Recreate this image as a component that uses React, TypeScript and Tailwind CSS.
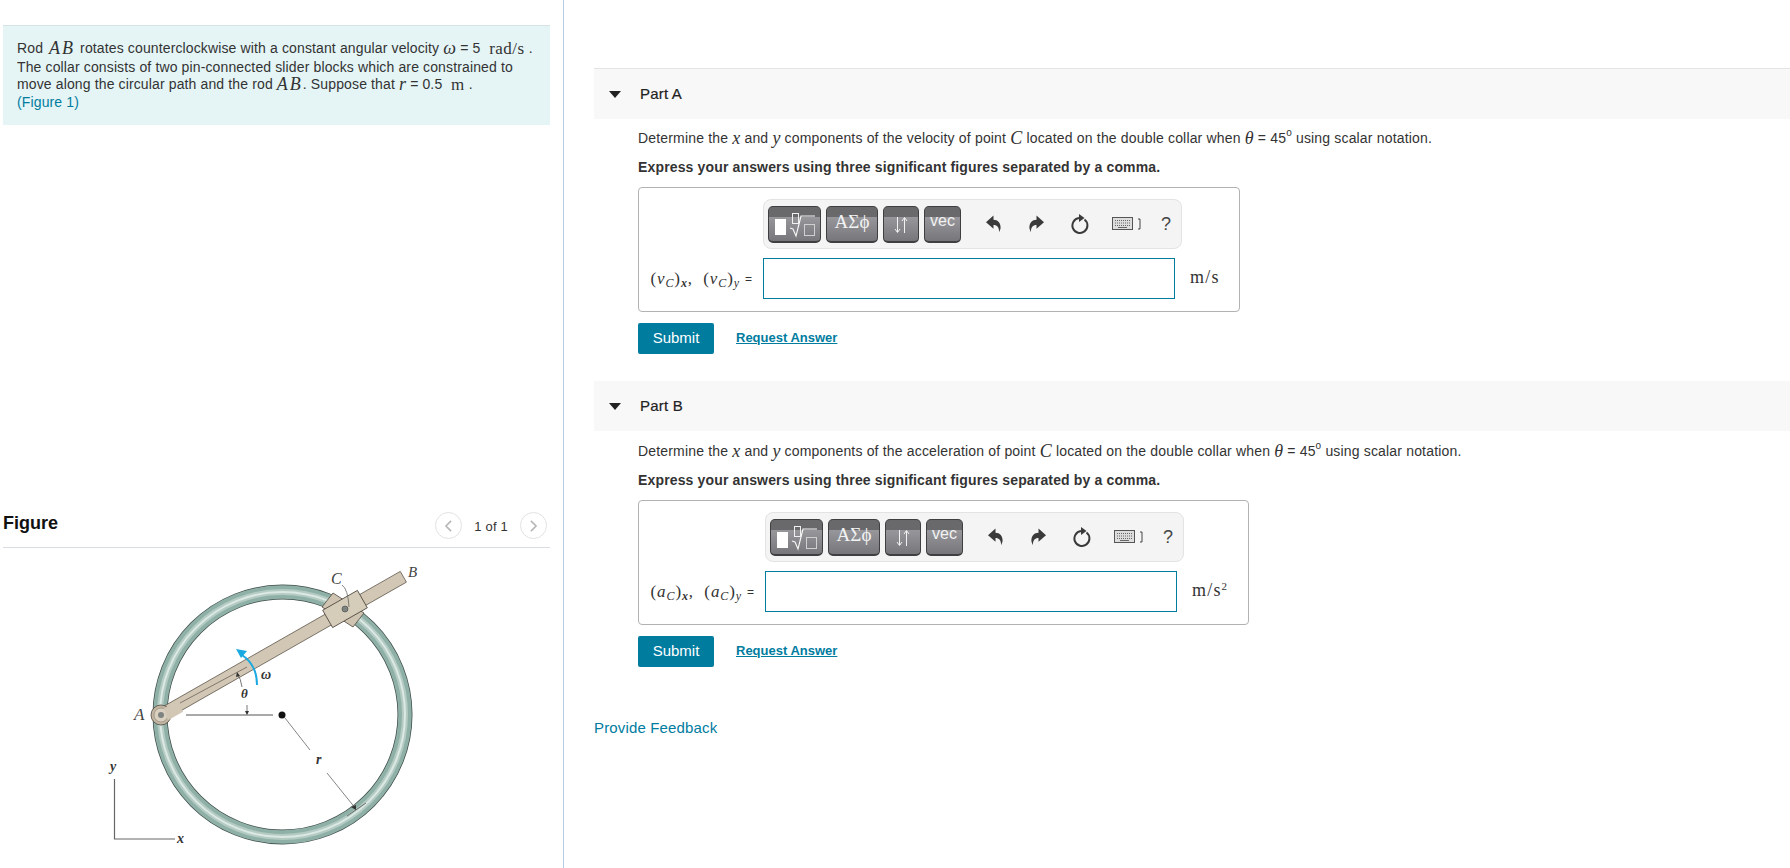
import React from "react";

const serif = "font-['Liberation_Serif','Times_New_Roman',serif]";

function M({ children }: { children: React.ReactNode }) {
  return <i className={`${serif} text-[18px] leading-none`}>{children}</i>;
}

function R({ children }: { children: React.ReactNode }) {
  return <span className={`${serif} text-[17px] leading-none tracking-[0.5px]`}>{children}</span>;
}

function ToolBtn({ className, children }: { className: string; children: React.ReactNode }) {
  return (
    <div
      className={`relative flex h-[37px] items-start justify-center overflow-hidden rounded-[5px] border border-[#3f3f42] border-b-2 bg-[linear-gradient(#69696c_0%,#69696c_28%,#97979b_30%,#77777b_100%)] text-[#f2f2f2] ${className}`}
    >
      {children}
    </div>
  );
}

function Toolbar({ className }: { className: string }) {
  return (
    <div
      className={`flex h-[50px] w-[419px] items-center rounded-[8px] border border-[#e3e3e3] bg-[#f4f4f4] pl-[4px] ${className}`}
    >
      <div className="flex gap-[5px]">
        <ToolBtn className="w-[53px]">
          <svg viewBox="0 0 53 35" className="h-[35px] w-[53px] shrink-0" fill="none">
            <rect x="7" y="12" width="11" height="16" fill="#ffffff" />
            <rect x="24.500" y="6.500" width="6" height="10" stroke="#f0f0f0" />
            <path d="M22 21l3 1 3 7 5-20h14" stroke="#f4f4f4" strokeWidth="1.200" />
            <rect x="36.500" y="17.500" width="10" height="11" stroke="#d0d0d0" />
          </svg>
        </ToolBtn>
        <ToolBtn className="w-[52px]">
          <span className={`${serif} mt-[4px] text-[19px] leading-[22px]`}>ΑΣϕ</span>
        </ToolBtn>
        <ToolBtn className="w-[36px]">
          <svg viewBox="0 0 36 35" className="h-[35px] w-[36px] shrink-0" fill="none" stroke="#f2f2f2" strokeWidth="1">
            <path d="M14.500 10v15M12 22l2.500 3.500L17 22" />
            <path d="M21.500 26V11M19 14l2.500-3.500L24 14" />
          </svg>
        </ToolBtn>
        <ToolBtn className="w-[37px]">
          <span className="mt-[3px] text-[16px] leading-[22px]">vec</span>
        </ToolBtn>
      </div>
      <div className="ml-[25px] flex items-center text-[#333333]">
        {/* undo */}
        <svg viewBox="0 0 16 18" className="h-[18px] w-[15px]" fill="#3a3a3a">
          <path d="M0 7L8 0v4.500c4.500 0 8 3 7.500 9.500-.5 1-1 3-1.500 3.500 0-5-2-7.500-6-7.500V14z" />
        </svg>
        {/* redo */}
        <svg viewBox="0 0 16 18" className="ml-[28px] h-[18px] w-[15px]" fill="#3a3a3a">
          <path d="M16 7L8 0v4.500C3.500 4.500 0 7.500.5 14c.5 1 1 3 1.500 3.500 0-5 2-7.500 6-7.500v4z" />
        </svg>
        {/* reset */}
        <svg viewBox="0 0 18 20" className="ml-[27px] h-[20px] w-[18px]" fill="none">
          <path d="M13.500 5.500A7.500 7.500 0 1 1 8 4" stroke="#3a3a3a" strokeWidth="2" />
          <path d="M8 0l5.500 4L8 8z" fill="#3a3a3a" />
        </svg>
        {/* keyboard */}
        <svg viewBox="0 0 29 14" className="ml-[23px] h-[14px] w-[29px]" fill="none">
          <rect x="0.500" y="0.500" width="20" height="12" fill="#dddddd" stroke="#555555" />
          <path d="M3 3.500h15M3 6h15M3 8.500h15" stroke="#666666" strokeDasharray="1 1" />
          <path d="M6 10.500h9" stroke="#666666" />
          <path d="M26 2h2v10h-2" stroke="#444444" />
        </svg>
        <span className="ml-[20px] text-[18px] leading-none text-[#444444]">?</span>
      </div>
    </div>
  );
}

type PartProps = {
  title: string;
  kind: string;
  letter: string;
  unit: React.ReactNode;
  boxClass: string;
  toolClass: string;
  labelClass: string;
  textClass: string;
};

function Part({ title, kind, letter, unit, boxClass, toolClass, labelClass, textClass }: PartProps) {
  const sub = "text-[12px] leading-none";
  return (
    <section>
      <div className="flex h-[50px] items-center bg-[#f8f8f8] pl-[15px]">
        <span className="h-0 w-0 border-x-[6px] border-t-[7px] border-x-transparent border-t-[#222222]" />
        <span className="ml-[19px] text-[15px] font-medium tracking-[0.2px] text-[#222222] [-webkit-text-stroke:0.2px_#222222]">{title}</span>
      </div>
      <div className="pl-[44px]">
        <p className={`flex h-[20px] items-center whitespace-pre text-[14px] leading-[20px] tracking-[0.17px] text-[#333333] ${textClass}`}>
          Determine the <M>x</M> and <M>y</M> components of the {kind} of point <M>C</M> located on the double collar when <M>θ</M> = 45<sup className="text-[10px]">o</sup> using scalar notation.
        </p>
        <p className="mt-[9px] text-[14px] font-bold leading-[20px] tracking-[0.15px] text-[#333333]">
          Express your answers using three significant figures separated by a comma.
        </p>
        <div className={`mt-[10px] rounded-[4px] border border-[#b2b2b2] pb-[12px] pt-[11px] ${boxClass}`}>
          <Toolbar className={toolClass} />
          <div className="mt-[9px] flex items-center">
            <div className={`flex items-center justify-end pr-[11px] text-[12px] text-[#333333] ${labelClass}`}>
              <span className={`${serif} whitespace-pre text-[17px] tracking-[0.9px]`}>
                (<i>{letter}</i><sub className={sub}><i>C</i></sub>)<sub className={sub}><b><i>x</i></b></sub>,  (<i>{letter}</i><sub className={sub}><i>C</i></sub>)<sub className={sub}><i>y</i></sub>
              </span>
              <span className="ml-[5px]">=</span>
            </div>
            <div className="h-[41px] w-[412px] border border-[#007c9f] bg-white" />
            <span className={`${serif} mb-[3px] ml-[15px] text-[18px] tracking-[1.2px] text-[#333333]`}>{unit}</span>
          </div>
        </div>
        <div className="mt-[11px] flex items-center">
          <button className="h-[31px] w-[76px] rounded-[2px] bg-[#007c9f] text-[15px] text-white">Submit</button>
          <a className="mb-[2px] ml-[22px] text-[13px] font-bold text-[#007c9f] underline">Request Answer</a>
        </div>
      </div>
    </section>
  );
}

function CollarFigure() {
  return (
    <svg viewBox="3 548 549 320" className="block h-[320px] w-[549px]" fill="none">
      {/* ring */}
      <circle cx="282.500" cy="714.500" r="122.500" stroke="#3f4d49" strokeWidth="15" />
      <circle cx="282.500" cy="714.500" r="122.500" stroke="#8fb0a6" strokeWidth="13.500" />
      <circle cx="282.500" cy="714.500" r="122.500" stroke="#b4cbc3" strokeWidth="6" />
      <circle cx="282.500" cy="714.500" r="122.500" stroke="#dbe8e3" strokeWidth="2" />
      {/* slider block on the ring */}
      <polygon points="333,593 364,613 353,627 322,607" fill="#cfc4b2" stroke="#4d463d" strokeWidth="0.800" />
      {/* rod */}
      <g transform="translate(161 715) rotate(-29.700)">
        <rect x="0" y="-6.200" width="279" height="12.400" fill="#d2c7b5" stroke="#5a5248" strokeWidth="0.700" />
      </g>
      {/* collar on the rod */}
      <g transform="translate(345 609) rotate(-29.700)">
        <rect x="-20" y="-10" width="40" height="20" fill="#d6ccba" stroke="#4d463d" strokeWidth="0.800" />
      </g>
      <circle cx="345" cy="609" r="3" fill="#7d8380" stroke="#444444" strokeWidth="0.600" />
      {/* pin at A */}
      <circle cx="161" cy="715" r="10" fill="#c2b6a3" stroke="#4d463d" strokeWidth="0.800" />
      <circle cx="161" cy="715" r="7" fill="#dad0bf" stroke="#7a7164" strokeWidth="0.500" />
      <path d="M164 708.500l13-7.500 6 10.800-15 8.500z" fill="#d2c7b5" />
      <circle cx="161" cy="715" r="3" fill="#7d8380" />
      {/* thin lines */}
      <path d="M180 703L247 667" stroke="#6b6358" strokeWidth="0.800" />
      <path d="M186 715H273" stroke="#555555" />
      <path d="M237 673q4 6 5 14M247 705v9" stroke="#555555" strokeWidth="0.800" />
      <path d="M245 711l2 4 2-4zM236 677l1-5 3 4z" fill="#333333" />
      <path d="M285 718L310 750M327 773L356 809" stroke="#666666" strokeWidth="0.800" />
      <path d="M347 816L366 803" stroke="#555555" strokeWidth="0.800" />
      <path d="M351 807l5 3 0-5z" fill="#333333" />
      <path d="M342 585q6 4 7 22" stroke="#666666" strokeWidth="0.800" />
      <circle cx="282" cy="715" r="3.500" fill="#111111" />
      {/* angular velocity arrow */}
      <path d="M257 685Q257 665 242 655" stroke="#1aa9e0" strokeWidth="2" />
      <path d="M236 649l11 2-6 7z" fill="#1aa9e0" />
      {/* axes */}
      <path d="M114.500 779V839H175" stroke="#666666" strokeWidth="1.200" />
      <g className={`${serif} fill-[#333333] text-[13px] italic`}>
        <text x="134" y="720" fontSize="17" fill="#444444">A</text>
        <text x="408" y="577" fontSize="15" fill="#444444">B</text>
        <text x="331" y="584" fontSize="16" fill="#444444">C</text>
        <text x="261" y="679" fontSize="14" fontWeight="bold">ω</text>
        <text x="241" y="698" fontSize="13" fontWeight="bold">θ</text>
        <text x="316" y="764" fontSize="14" fontWeight="bold">r</text>
        <text x="110" y="771" fontSize="14" fontWeight="bold">y</text>
        <text x="177" y="843" fontSize="14" fontWeight="bold">x</text>
      </g>
    </svg>
  );
}

export default function App() {
  return (
    <div className="flex h-[868px] w-[1790px] overflow-hidden bg-white font-['Liberation_Sans',Arial,sans-serif]">
      {/* Left column */}
      <div className="flex w-[564px] shrink-0 flex-col border-r border-[#b7cde3] pl-[3px] pr-[13px]">
        <div className="mt-[25px] h-[100px] border-t border-[#d6e2e6] bg-[#e5f5f6] px-[14px] pt-[13px] text-[14px] leading-[18px] tracking-[0.13px] text-[#333333]">
          <p className="mb-[1px] flex h-[18px] items-center whitespace-pre">
            Rod <span className="ml-[2px] mr-[1px] tracking-[2px]"><M>AB</M></span> rotates counterclockwise with a constant angular velocity <M>ω</M> = 5 <R> rad/s</R> .
          </p>
          <p className="h-[17px]">The collar consists of two pin-connected slider blocks which are constrained to</p>
          <p className="flex h-[18px] items-center whitespace-pre">
            move along the circular path and the rod <span className="tracking-[2px]"><M>AB</M></span>. Suppose that <M>r</M> = 0.5 <R> m</R> .
          </p>
          <p className="text-[#007c9f]">(Figure 1)</p>
        </div>

        <div className="mt-[385px] flex h-[38px] items-start justify-between border-b border-[#d9dde2]">
          <h2 className="mt-[2px] text-[18px] font-bold leading-[22px] text-[#111111]">Figure</h2>
          <div className="mr-[3px] mt-[2px] flex items-center text-[13px] tracking-[0.2px] text-[#333333]">
            <span className="flex h-[27px] w-[27px] items-center justify-center rounded-full border border-[#e2e2e2] text-[#b5b5b5]">
              <svg viewBox="0 0 10 14" className="h-[12px] w-[9px]" fill="none" stroke="currentColor" strokeWidth="1.800"><path d="M8 1L2 7l6 6" /></svg>
            </span>
            <span className="mx-[12px] mt-[2px]">1 of 1</span>
            <span className="flex h-[27px] w-[27px] items-center justify-center rounded-full border border-[#e2e2e2] text-[#b5b5b5]">
              <svg viewBox="0 0 10 14" className="h-[12px] w-[9px]" fill="none" stroke="currentColor" strokeWidth="1.800"><path d="M2 1l6 6-6 6" /></svg>
            </span>
          </div>
        </div>
        <CollarFigure />
      </div>

      {/* Right column */}
      <div className="min-w-0 flex-1 pl-[30px] pt-[68px]">
        <div className="border-t border-[#e4e4e4]">
          <Part
            title="Part A"
            kind="velocity"
            letter="v"
            unit="m/s"
            boxClass="w-[602px]"
            toolClass="ml-[124px]"
            labelClass="w-[124px]"
            textClass="mt-[9px]"
          />
        </div>
        <div className="mt-[27px]">
          <Part
            title="Part B"
            kind="acceleration"
            letter="a"
            unit={<>m/s<sup className="text-[11px]">2</sup></>}
            boxClass="w-[611px]"
            toolClass="ml-[126px]"
            labelClass="w-[126px]"
            textClass="mt-[10px]"
          />
        </div>
        <p className="mt-[50px] text-[15px] tracking-[0.15px] text-[#007c9f]">Provide Feedback</p>
      </div>
    </div>
  );
}
